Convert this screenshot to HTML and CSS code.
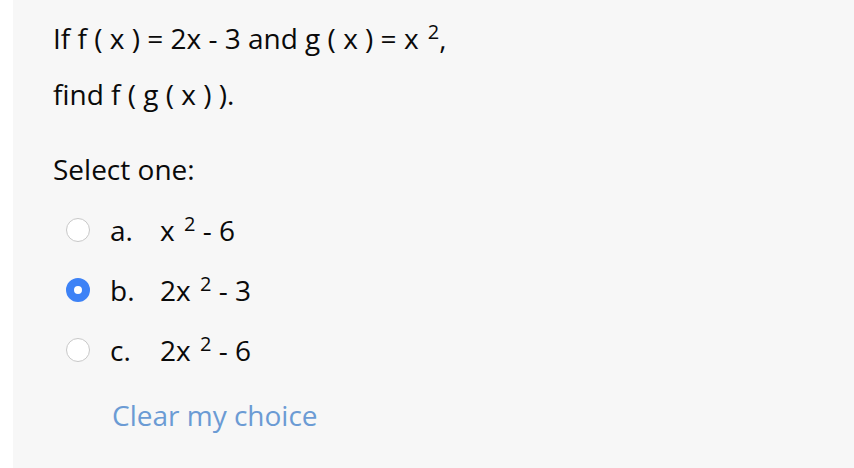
FILE: index.html
```html
<!DOCTYPE html>
<html>
<head>
<meta charset="utf-8">
<link rel="stylesheet" href="styles.css">
</head>
<body>
<div class="panel">
  <div class="qtext">
    <p>If f ( x ) = 2x - 3 and g ( x ) = x <sup>2</sup>,</p>
    <p>find f ( g ( x ) ).</p>
  </div>
  <div class="prompt">Select one:</div>
  <div class="answers">
    <label class="opt"><span class="radio"></span><span class="letter">a.</span><span class="ans">x <sup>2</sup> - 6</span></label>
    <label class="opt"><span class="radio checked"></span><span class="letter">b.</span><span class="ans">2x <sup>2</sup> - 3</span></label>
    <label class="opt"><span class="radio"></span><span class="letter">c.</span><span class="ans">2x <sup>2</sup> - 6</span></label>
  </div>
  <a class="clear">Clear my choice</a>
</div>
</body>
</html>
```

FILE: styles.css
```css
html, body {
  margin: 0;
  padding: 0;
  background: #ffffff;
}
body {
  font-family: "Open Sans", "Liberation Sans", sans-serif;
  font-size: 28px;
  color: #0a0a0a;
}
.panel {
  margin-left: 13px;
  height: 468px;
  background: #f7f7f7;
  padding: 18px 0 0 40px;
  box-sizing: border-box;
  display: flex;
  flex-direction: column;
}
.qtext {
  display: flex;
  flex-direction: column;
  gap: 16px;
}
.qtext p {
  margin: 0;
  line-height: 40px;
}
sup {
  font-size: 20px;
  line-height: 0;
  position: relative;
  vertical-align: baseline;
  top: -10px;
  padding-left: 2px;
}
.prompt {
  margin-top: 35px;
  line-height: 40px;
}
.answers {
  margin-top: 21px;
  display: flex;
  flex-direction: column;
  gap: 20px;
}
.opt {
  display: flex;
  align-items: center;
  height: 40px;
  line-height: 40px;
}
.radio {
  width: 22px;
  height: 22px;
  border-radius: 50%;
  border: 1px solid #c8c8c8;
  background: #ffffff;
  margin-left: 13px;
  box-sizing: content-box;
  flex: none;
}
.radio.checked {
  width: 8px;
  height: 8px;
  border: 8px solid #3d82f6;
}
.letter {
  width: 50px;
  margin-left: 20px;
}
.clear {
  margin-top: 25px;
  margin-left: 59px;
  color: #6b9bd4;
  line-height: 40px;
}
```
